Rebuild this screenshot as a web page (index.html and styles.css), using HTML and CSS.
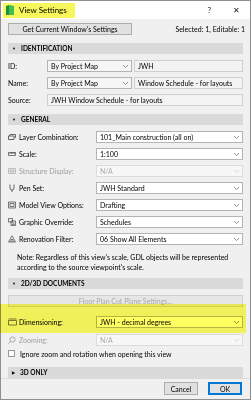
FILE: index.html
```html
<!DOCTYPE html>
<html lang="en">
<head>
  <meta charset="UTF-8">
  <title>View Settings</title>
  <link rel="stylesheet" href="styles.css">
</head>
<body>
  <div class="window">
    <div class="titlebar">
      <div class="title-mark">
        <svg class="app-icon" width="8" height="10" viewBox="0 0 8 10">
          <path d="M0 1 L3 0 L3 10 L0 10 Z" fill="#1e8f3a"/>
          <path d="M3 0 L8 1 L8 10 L3 10 Z" fill="#3fbf4f"/>
        </svg>
        <span class="title">View Settings</span>
      </div>
      <span class="title-ctrl help">?</span>
      <span class="title-ctrl close">&#x2715;</span>
    </div>

    <div class="content">
      <div class="toprow">
        <div class="btn btn-wide">Get Current Window's Settings</div>
        <span class="sel-info">Selected: 1, Editable: 1</span>
      </div>

      <div class="section-head"><span class="tri">&#9660;</span>IDENTIFICATION</div>
      <div class="row id-row">
        <span class="lbl">ID:</span>
        <div class="select sel-short">By Project Map<svg class="chev" width="5" height="3" viewBox="0 0 5 3"><path d="M0 0 L2.5 2.5 L5 0" fill="none" stroke="#777" stroke-width="0.8"/></svg></div>
        <div class="field">JWH</div>
      </div>
      <div class="row id-row">
        <span class="lbl">Name:</span>
        <div class="select sel-short">By Project Map<svg class="chev" width="5" height="3" viewBox="0 0 5 3"><path d="M0 0 L2.5 2.5 L5 0" fill="none" stroke="#777" stroke-width="0.8"/></svg></div>
        <div class="field">Window Schedule - for layouts</div>
      </div>
      <div class="row id-row">
        <span class="lbl">Source:</span>
        <div class="field">JWH Window Schedule - for layouts</div>
      </div>

      <div class="section-head head-general"><span class="tri">&#9660;</span>GENERAL</div>
      <div class="row gen-row">
        <span class="lbl">
          <svg class="ico" width="8" height="8" viewBox="0 0 8 8"><path d="M2 1.5 H7.5 V5 M1 3 H6 V6.5 H0.5 V3 Z M1 3 L2 1.5" fill="none" stroke="#444" stroke-width="0.8"/></svg>
          Layer Combination:
        </span>
        <div class="select">101_Main construction (all on)<svg class="chev" width="5" height="3" viewBox="0 0 5 3"><path d="M0 0 L2.5 2.5 L5 0" fill="none" stroke="#777" stroke-width="0.8"/></svg></div>
      </div>
      <div class="row gen-row">
        <span class="lbl">
          <svg class="ico" width="8" height="8" viewBox="0 0 8 8"><path d="M0.5 2.5 H7.5 V5.5 H0.5 Z M2 2.5 V4 M3.5 2.5 V4 M5 2.5 V4 M6.5 2.5 V4" fill="none" stroke="#444" stroke-width="0.7"/></svg>
          Scale:
        </span>
        <div class="select">1:100<svg class="chev" width="5" height="3" viewBox="0 0 5 3"><path d="M0 0 L2.5 2.5 L5 0" fill="none" stroke="#777" stroke-width="0.8"/></svg></div>
      </div>
      <div class="row gen-row disabled">
        <span class="lbl">
          <svg class="ico" width="8" height="8" viewBox="0 0 8 8"><path d="M0.5 1.5 H7.5 V6.5 H0.5 Z M0.5 4 H7.5 M2.8 1.5 V6.5 M5.2 1.5 V6.5" fill="none" stroke="#aaa" stroke-width="0.7"/></svg>
          Structure Display:
        </span>
        <div class="select">N/A<svg class="chev" width="5" height="3" viewBox="0 0 5 3"><path d="M0 0 L2.5 2.5 L5 0" fill="none" stroke="#ccc" stroke-width="0.8"/></svg></div>
      </div>
      <div class="row gen-row">
        <span class="lbl">
          <svg class="ico" width="8" height="8" viewBox="0 0 8 8"><path d="M2 0.5 V4 Q2 6 4 6 Q6 6 6 4 V0.5 M4 6 V8" fill="none" stroke="#444" stroke-width="0.8"/></svg>
          Pen Set:
        </span>
        <div class="select">JWH Standard<svg class="chev" width="5" height="3" viewBox="0 0 5 3"><path d="M0 0 L2.5 2.5 L5 0" fill="none" stroke="#777" stroke-width="0.8"/></svg></div>
      </div>
      <div class="row gen-row">
        <span class="lbl">
          <svg class="ico" width="8" height="8" viewBox="0 0 8 8"><path d="M0.5 1 H7.5 V7 H0.5 Z M2 2.5 H6 V5.5 H2 Z" fill="none" stroke="#444" stroke-width="0.7"/></svg>
          Model View Options:
        </span>
        <div class="select">Drafting<svg class="chev" width="5" height="3" viewBox="0 0 5 3"><path d="M0 0 L2.5 2.5 L5 0" fill="none" stroke="#777" stroke-width="0.8"/></svg></div>
      </div>
      <div class="row gen-row">
        <span class="lbl">
          <svg class="ico" width="8" height="8" viewBox="0 0 8 8"><path d="M0.5 0.5 H4.5 V4 H0.5 Z M3 3 H7.5 V7.5 H3 Z M4 5 H6.5 M4 6.5 H6.5" fill="none" stroke="#444" stroke-width="0.7"/></svg>
          Graphic Override:
        </span>
        <div class="select">Schedules<svg class="chev" width="5" height="3" viewBox="0 0 5 3"><path d="M0 0 L2.5 2.5 L5 0" fill="none" stroke="#777" stroke-width="0.8"/></svg></div>
      </div>
      <div class="row gen-row">
        <span class="lbl">
          <svg class="ico" width="8" height="8" viewBox="0 0 8 8"><path d="M4 0.8 L7.5 7 H0.5 Z M3 7 V4.5 H5 V7" fill="none" stroke="#444" stroke-width="0.7"/></svg>
          Renovation Filter:
        </span>
        <div class="select">06 Show All Elements<svg class="chev" width="5" height="3" viewBox="0 0 5 3"><path d="M0 0 L2.5 2.5 L5 0" fill="none" stroke="#777" stroke-width="0.8"/></svg></div>
      </div>
      <p class="note">Note: Regardless of this view's scale, GDL objects will be represented<br>according to the source viewpoint's scale.</p>

      <div class="section-head head-docs"><span class="tri">&#9660;</span>2D/3D DOCUMENTS</div>
      <div class="btn btn-full disabled-btn">Floor Plan Cut Plane Settings...</div>
      <div class="row gen-row row-dim">
        <span class="lbl">
          <svg class="ico ico-wide" width="9" height="8" viewBox="0 0 9 8"><path d="M0.5 2.5 H8.5 V7 H0.5 Z M0.5 1 H8.5" fill="none" stroke="#444" stroke-width="0.7"/></svg>
          Dimensioning:
        </span>
        <div class="select">JWH - decimal degrees<svg class="chev" width="5" height="3" viewBox="0 0 5 3"><path d="M0 0 L2.5 2.5 L5 0" fill="none" stroke="#777" stroke-width="0.8"/></svg></div>
      </div>
      <div class="row gen-row disabled row-zoom">
        <span class="lbl">
          <svg class="ico" width="8" height="8" viewBox="0 0 8 8"><circle cx="4.5" cy="3.5" r="2.6" fill="none" stroke="#999" stroke-width="0.8"/><path d="M2.6 5.4 L0.6 7.4" stroke="#999" stroke-width="1"/></svg>
          Zooming:
        </span>
        <div class="select">N/A<svg class="chev" width="5" height="3" viewBox="0 0 5 3"><path d="M0 0 L2.5 2.5 L5 0" fill="none" stroke="#ccc" stroke-width="0.8"/></svg></div>
      </div>
      <div class="check-row"><span class="check"></span>Ignore zoom and rotation when opening this view</div>

      <div class="section-head head-3d"><span class="tri tri-right">&#9654;</span>3D ONLY</div>

      <div class="mark-band"></div>
    </div>

    <div class="footer">
      <div class="btn btn-foot">Cancel</div>
      <div class="btn btn-foot btn-default">OK</div>
    </div>
  </div>
</body>
</html>
```

FILE: styles.css
```css
* {
  box-sizing: border-box;
}

body {
  margin: 0;
  font-family: 'Lato', 'Liberation Sans', sans-serif;
  font-size: 7px;
  color: #000;
  background: #fff;
}

.window {
  width: 251px;
  height: 400px;
  border: 1px solid #8f8f8f;
  background: #f0f0f0;
  display: flex;
  flex-direction: column;
}

.titlebar {
  height: 19px;
  background: #fff;
  display: flex;
  align-items: center;
  padding: 0 2px;
}

.title-mark {
  display: flex;
  align-items: center;
  gap: 5px;
  height: 15px;
  padding: 0 8px 0 3px;
  background: #f7f75c;
}

.title {
  font-size: 8px;
}

.title-ctrl {
  font-size: 8px;
  color: #222;
}

.help {
  margin-left: auto;
  margin-right: 22px;
}

.close {
  margin-right: 8px;
}

.content {
  position: relative;
  flex: 1;
  padding: 4px 7px 0;
  display: flex;
  flex-direction: column;
}

.toprow {
  display: flex;
  align-items: center;
  height: 12px;
}

.btn {
  display: flex;
  align-items: center;
  justify-content: center;
  height: 12px;
  background: #e1e1e1;
  border: 1px solid #adadad;
}

.btn-wide {
  width: 124px;
}

.sel-info {
  margin-left: auto;
  margin-right: -2px;
}

.section-head {
  display: flex;
  align-items: center;
  height: 11px;
  margin-top: 8px;
  padding-left: 4px;
  background: #dadada;
  font-weight: bold;
  font-size: 6.5px;
}

.tri {
  font-size: 4px;
  margin-right: 5px;
}

.row {
  display: flex;
  align-items: center;
  height: 12px;
  margin-top: 5px;
}

.section-head + .row {
  margin-top: 6px;
}

.lbl {
  display: flex;
  align-items: center;
  flex: none;
}

.id-row .lbl {
  width: 39px;
}

.gen-row .lbl {
  width: 88px;
}

.ico {
  margin-right: 3px;
  flex: none;
}

.ico-wide {
  margin-right: 2px;
}

.select,
.field {
  position: relative;
  display: flex;
  align-items: center;
  height: 12px;
  padding-left: 3px;
  border: 1px solid #b4b4b4;
  background: #fff;
  white-space: nowrap;
  overflow: hidden;
}

.select {
  flex: 1;
}

.sel-short {
  flex: none;
  width: 85px;
  background: #f6f6f6;
}

.field {
  flex: 1;
  margin-left: 2px;
  background: #f3f3f3;
  border-color: #cfcfcf;
}

.id-row .lbl + .field {
  margin-left: 0;
}

.chev {
  position: absolute;
  right: 3px;
  top: 4px;
}

.disabled .lbl {
  color: #9c9c9c;
}

.disabled .select {
  color: #a9a9a9;
  border-color: #dcdcdc;
  background: #f7f7f7;
}

.note {
  margin: 7px 0 0 9px;
  line-height: 10px;
}

.head-docs {
  margin-top: 6px;
}

.btn-full {
  margin-top: 6px;
}

.disabled-btn {
  color: #a8a8a8;
  border-color: #cfcfcf;
  background: #e6e6e6;
}

.row-dim {
  margin-top: 9px;
}

.row-zoom {
  margin-top: 6px;
}

.check-row {
  display: flex;
  align-items: center;
  margin-top: 3px;
  height: 9px;
}

.check {
  width: 7px;
  height: 7px;
  border: 1px solid #9a9a9a;
  background: #fff;
  margin-right: 5px;
}

.head-3d {
  margin-top: 9px;
}

.mark-band {
  position: absolute;
  left: -1px;
  right: 4px;
  top: 285px;
  height: 29px;
  background: #ffff50;
  mix-blend-mode: multiply;
  opacity: 0.9;
}

.footer {
  display: flex;
  justify-content: flex-end;
  gap: 10px;
  padding: 3px 8px 4px;
  border-top: 1px solid #dcdcdc;
}

.btn-foot {
  width: 34px;
  height: 13px;
}

.btn-default {
  border: 1px solid #0078d7;
  box-shadow: inset 0 0 0 1px #0078d7;
}
```
